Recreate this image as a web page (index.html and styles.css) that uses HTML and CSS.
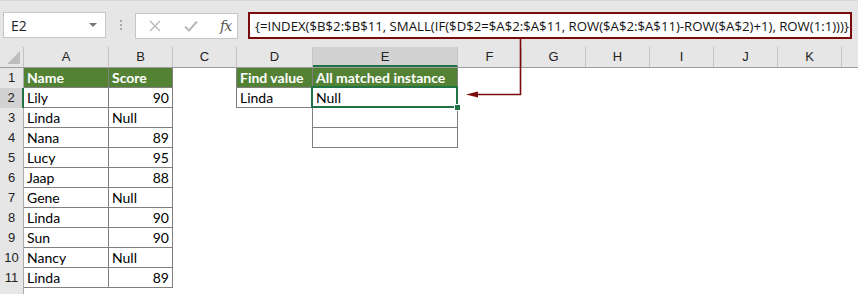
FILE: index.html
```html
<!DOCTYPE html>
<html lang="en">
<head>
  <meta charset="UTF-8">
  <title>INDEX SMALL</title>
  <link rel="stylesheet" href="styles.css">
</head>
<body>
<div class="app">
  <!-- Строка формул -->
  <div class="formula-bar">
    <div class="name-box">
      <span>E2</span>
      <span class="caret"></span>
    </div>
    <div class="grip">
      <i></i><i></i><i></i>
    </div>
    <div class="fx-box">
      <svg class="fx-icon" width="12" height="12" viewBox="0 0 12 12"><path d="M1 1L11 11M11 1L1 11" stroke="#b8b8b8" stroke-width="1.4" fill="none"/></svg>
      <svg class="fx-icon" width="14" height="12" viewBox="0 0 14 12"><path d="M1 6.5L5 10.5L13 1.5" stroke="#b8b8b8" stroke-width="2" fill="none"/></svg>
      <span class="fx">fx</span>
    </div>
    <div class="formula">{=INDEX($B$2:$B$11, SMALL(IF($D$2=$A$2:$A$11, ROW($A$2:$A$11)-ROW($A$2)+1), ROW(1:1)))}</div>
  </div>

  <!-- Лист -->
  <div class="sheet">
    <div class="row head">
      <div class="corner"><span class="tri"></span></div>
      <div>A</div><div>B</div><div>C</div><div>D</div><div class="active">E</div>
      <div>F</div><div>G</div><div>H</div><div>I</div><div>J</div><div>K</div><div class="last"></div>
    </div>
    <div class="row">
      <div class="rh">1</div>
      <div class="b green">Name</div><div class="b green">Score</div><div class="br"></div>
      <div class="b green">Find value</div><div class="b green">All matched instance</div>
    </div>
    <div class="row">
      <div class="rh sel">2</div>
      <div class="b">Lily</div><div class="b num">90</div><div class="br"></div>
      <div class="b">Linda</div><div class="b">Null</div>
    </div>
    <div class="row">
      <div class="rh">3</div>
      <div class="b">Linda</div><div class="b">Null</div><div></div>
      <div class="br"></div><div class="b"></div>
    </div>
    <div class="row">
      <div class="rh">4</div>
      <div class="b">Nana</div><div class="b num">89</div><div></div>
      <div class="br"></div><div class="b"></div>
    </div>
    <div class="row">
      <div class="rh">5</div>
      <div class="b">Lucy</div><div class="b num">95</div>
    </div>
    <div class="row">
      <div class="rh">6</div>
      <div class="b">Jaap</div><div class="b num">88</div>
    </div>
    <div class="row">
      <div class="rh">7</div>
      <div class="b">Gene</div><div class="b">Null</div>
    </div>
    <div class="row">
      <div class="rh">8</div>
      <div class="b">Linda</div><div class="b num">90</div>
    </div>
    <div class="row">
      <div class="rh">9</div>
      <div class="b">Sun</div><div class="b num">90</div>
    </div>
    <div class="row">
      <div class="rh">10</div>
      <div class="b">Nancy</div><div class="b">Null</div>
    </div>
    <div class="row">
      <div class="rh">11</div>
      <div class="b">Linda</div><div class="b num">89</div>
    </div>
    <div class="row">
      <div class="rh"></div>
    </div>
  </div>

  <!-- Выделение E2 и стрелка -->
  <div class="selection"><span class="handle"></span></div>
  <svg class="pointer" width="858" height="294" viewBox="0 0 858 294">
    <path d="M520.5 37V94.5H475" stroke="#7b0a0a" stroke-width="1.6" fill="none"/>
    <path d="M466 94.5L478 91.5L478 97.5Z" fill="#7b0a0a"/>
  </svg>
</div>
</body>
</html>
```

FILE: styles.css
```css
* {
  margin: 0;
  padding: 0;
  box-sizing: border-box;
}
body {
  background: #fff;
  font-family: 'Lato', 'Liberation Sans', sans-serif;
  font-size: 14px;
  color: #000;
}
.app {
  position: relative;
  width: 858px;
  height: 294px;
  overflow: hidden;
}

/* Строка формул */
.formula-bar {
  display: flex;
  align-items: flex-start;
  height: 47px;
  padding-top: 11px;
  background: #e6e6e6;
  border-top: 1px solid #d8d8d8;
}
.name-box {
  display: flex;
  align-items: center;
  justify-content: space-between;
  width: 103px;
  height: 26px;
  margin: 0 0 0 3px;
  padding: 0 8px 0 7px;
  background: #fff;
  border: 1px solid #c6c6c6;
  font-family: 'Open Sans', 'Noto Sans', sans-serif;
  font-size: 14px;
  color: #222;
}
.caret {
  width: 0;
  height: 0;
  border-left: 4px solid transparent;
  border-right: 4px solid transparent;
  border-top: 4px solid #777;
}
.grip {
  display: flex;
  flex-direction: column;
  align-items: center;
  gap: 2px;
  width: 29px;
  padding-top: 8px;
}
.grip i {
  width: 2px;
  height: 2px;
  background: #a8a8a8;
}
.fx-box {
  display: flex;
  align-items: center;
  width: 103px;
  height: 26px;
  margin-top: 1px;
  padding-left: 13px;
  background: #fff;
  border: 1px solid #c6c6c6;
}
.fx-icon:nth-child(1) {
  margin-right: 23px;
}
.fx {
  margin-left: 22px;
  font-family: 'DejaVu Serif', serif;
  font-style: italic;
  font-size: 14px;
  color: #555;
  letter-spacing: -1px;
}
.formula {
  width: 604px;
  height: 27px;
  margin-left: 10px;
  padding: 3px 0 0 5px;
  background: #fff;
  border: 2px solid #7b0a0a;
  font-family: 'Open Sans', 'Noto Sans', sans-serif;
  font-size: 13.2px;
  letter-spacing: 0;
  white-space: nowrap;
  color: #111;
}

/* Лист */
.row {
  display: grid;
  grid-template-columns: 24px 85px 64px 64px 76px 145px 64px 64px 64px 64px 64px 64px 1fr;
  height: 20px;
  line-height: 19px;
}
.row > div {
  padding: 0 3px;
  white-space: nowrap;
  overflow: hidden;
}
.row.head {
  height: 21px;
  line-height: 20px;
  background: #e6e6e6;
  border-bottom: 1px solid #9e9e9e;
  font-family: 'Liberation Sans', sans-serif;
  font-size: 13px;
  text-align: center;
  color: #222;
}
.row.head > div {
  border-right: 1px solid #c4c4c4;
}
.row.head > div.last {
  border-right: none;
}
.row.head > div.active {
  background: #d2d2d2;
  border-bottom: 2px solid #217346;
}
.corner {
  position: relative;
}
.tri {
  position: absolute;
  right: 3px;
  bottom: 3px;
  width: 0;
  height: 0;
  border-left: 13px solid transparent;
  border-bottom: 13px solid #bdbdbd;
}
.rh {
  background: #e6e6e6;
  border-right: 1px solid #ababab;
  text-align: center;
  font-family: 'Liberation Sans', sans-serif;
  font-size: 13px;
  color: #222;
}
.row > .rh {
  padding: 0;
}
.rh.sel {
  background: #d2d2d2;
  border-right: 2px solid #217346;
}
.b {
  border-right: 1px solid #7f7f7f;
  border-bottom: 1px solid #7f7f7f;
}
.br {
  border-right: 1px solid #7f7f7f;
}
.num {
  text-align: right;
}
.green {
  background: #548235;
  color: #fff;
  font-weight: bold;
}

/* Выделенная ячейка */
.selection {
  position: absolute;
  left: 311px;
  top: 86px;
  width: 147px;
  height: 22px;
  border: 2px solid #217346;
  pointer-events: none;
}
.handle {
  position: absolute;
  right: -5px;
  bottom: -5px;
  width: 7px;
  height: 7px;
  background: #217346;
  border: 1px solid #fff;
}
.pointer {
  position: absolute;
  left: 0;
  top: 0;
  pointer-events: none;
}
```
